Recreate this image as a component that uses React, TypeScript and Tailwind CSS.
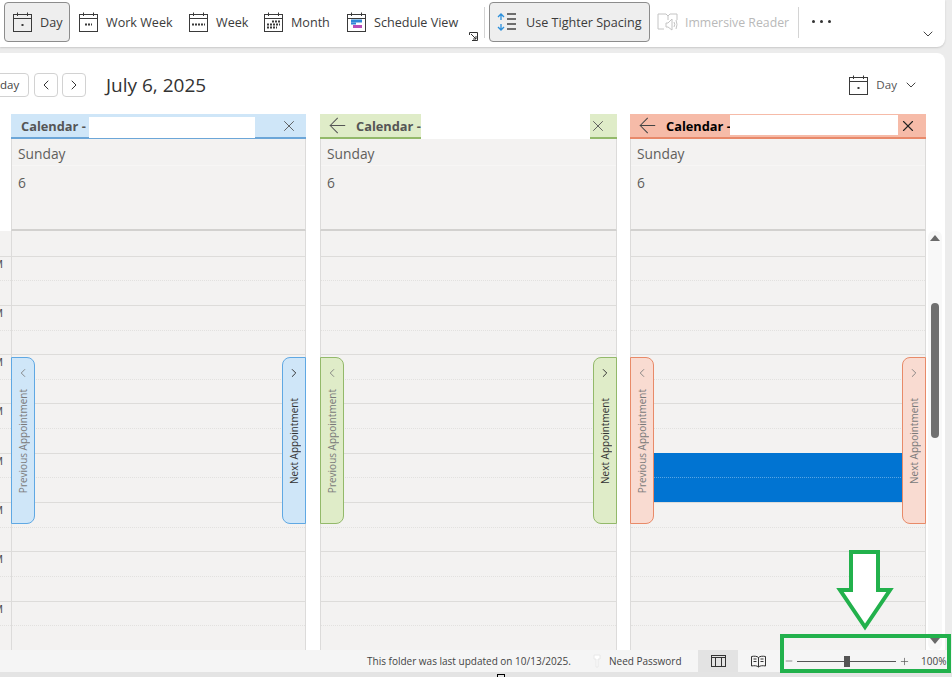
import { ArrowLeft, ChevronDown, ChevronLeft, ChevronRight, Minus, Plus, X } from 'lucide-react';

const font = { fontFamily: '"Open Sans", "Noto Sans", sans-serif' };

function CalIcon({ kind }: { kind: string }) {
  return (
    <svg viewBox="0 0 19 20" className="w-[19px] h-[20px] shrink-0" fill="none" stroke="#3a3a3a" strokeWidth="1">
      <rect x="0.5" y="2.5" width="18" height="17" />
      <path d="M0.5 6.5H18.5M4.5 0.5V4M14.5 0.5V4" />
      {kind === 'day' && <rect x="8.5" y="12" width="2" height="2" fill="#3a3a3a" stroke="none" />}
      {kind === 'work' && <path d="M6 12.5H13" strokeDasharray="2 1" strokeWidth="2" />}
      {kind === 'week' && <path d="M3 12.5H16" strokeDasharray="2 1" strokeWidth="2" />}
      {kind === 'month' && <path d="M8 9.5H16M3 12.5H16M3 15.5H13" strokeDasharray="2 1" strokeWidth="2" />}
      {kind === 'schedule' && (
        <>
          <rect x="4" y="7.5" width="11" height="3" fill="#2f88d8" stroke="none" />
          <rect x="4" y="10.5" width="5" height="2" fill="#2f88d8" stroke="none" />
          <rect x="6" y="13" width="9" height="3" fill="#b84db8" stroke="none" />
        </>
      )}
    </svg>
  );
}

function RibbonButton({ kind, label, width, active }: { kind: string; label: string; width: string; active?: boolean }) {
  return (
    <div
      className={`flex items-center gap-[8px] h-[40px] pl-[8px] shrink-0 rounded-[4px] border ${width} ${
        active ? 'bg-[#eeeeee] border-[#8c8c8c]' : 'border-transparent'
      }`}
    >
      <CalIcon kind={kind} />
      <span className="text-[12.6px] leading-[16px] pt-[1px] text-[#3b3b3b] whitespace-nowrap">{label}</span>
    </div>
  );
}

function Ribbon() {
  return (
    <div className="h-[47px] mr-[7px] bg-white rounded-br-[8px] shadow-[0_1px_2px_#c8c8c8] flex items-start pt-[2px] pl-[4px] relative">
      <RibbonButton kind="day" label="Day" width="w-[66px]" active />
      <RibbonButton kind="work" label="Work Week" width="w-[110px]" />
      <RibbonButton kind="week" label="Week" width="w-[75px]" />
      <RibbonButton kind="month" label="Month" width="w-[83px]" />
      <RibbonButton kind="schedule" label="Schedule View" width="w-[131px]" />
      <svg viewBox="0 0 9 9" className="w-[9px] h-[9px] mt-[30px] shrink-0" fill="none" stroke="#333">
        <path d="M0.5 3V0.5H8.5V8.5H3M2 2L7 7M7 4V7H4" />
      </svg>
      <div className="w-px h-[31px] bg-[#d4d4d4] mt-[5px] ml-[6px] shrink-0" />
      <div className="flex items-center h-[40px] w-[161px] ml-[4px] pl-[7px] gap-[9px] shrink-0 rounded-[4px] border border-[#8c8c8c] bg-[#eeeeee]">
        <svg viewBox="0 0 20 20" className="w-[20px] h-[20px] shrink-0" fill="none" strokeWidth="1.3">
          <path d="M4 2V8M4 12V18M1 5L4 2L7 5M1 15L4 18L7 15" stroke="#2a8fdc" />
          <path d="M10 2H19M10 7H19M10 12H19M10 17H19" stroke="#444" />
        </svg>
        <span className="text-[12.6px] leading-[16px] pt-[1px] text-[#3b3b3b] whitespace-nowrap">Use Tighter Spacing</span>
      </div>
      <div className="flex items-center h-[40px] ml-[7px] gap-[7px] shrink-0">
        <svg viewBox="0 0 21 20" className="w-[21px] h-[20px]" fill="none" stroke="#c4c4c4">
          <path d="M1 2H9L11 4L13 2H20V8M1 2V17H7M11 4V8M9 11H11L15 7V18L11 15H9ZM17 10Q18.500 12.500 17 15M19 8Q21 12.500 19 17" />
        </svg>
        <span className="w-[103px] text-[12.3px] leading-[16px] pt-[1px] text-[#b9b9b9] whitespace-nowrap">Immersive Reader</span>
      </div>
      <div className="w-px h-[31px] bg-[#d4d4d4] mt-[5px] ml-[10px] shrink-0" />
      <div className="flex gap-[5px] mt-[18px] ml-[13px] shrink-0">
        <div className="w-[3px] h-[3px] rounded-full bg-[#333]" />
        <div className="w-[3px] h-[3px] rounded-full bg-[#333]" />
        <div className="w-[3px] h-[3px] rounded-full bg-[#333]" />
      </div>
      <ChevronDown className="w-[16px] h-[16px] text-[#444] mt-[24px] ml-auto mr-[9px]" strokeWidth={1.5} />
    </div>
  );
}

function NavRow() {
  return (
    <div className="h-[61px] shrink-0 flex items-start pt-[20px] overflow-hidden rounded-tr-[8px]">
      <div className="h-[24px] w-[50px] -ml-[21px] pr-[2px] shrink-0 border border-[#d2d2d2] rounded-[4px] flex items-center justify-center text-[11.5px] text-[#444]">
        Today
      </div>
      <div className="h-[24px] w-[24px] ml-[5px] shrink-0 border border-[#d2d2d2] rounded-[4px] flex items-center justify-center">
        <ChevronLeft className="w-[16px] h-[16px] text-[#333]" strokeWidth={1.5} />
      </div>
      <div className="h-[24px] w-[24px] ml-[4px] shrink-0 border border-[#d2d2d2] rounded-[4px] flex items-center justify-center">
        <ChevronRight className="w-[16px] h-[16px] text-[#333]" strokeWidth={1.5} />
      </div>
      <div className="ml-[20px] text-[19px] leading-[24px] font-medium text-[#333]">July 6, 2025</div>
      <div className="ml-auto flex items-center h-[24px] mr-[26px]">
        <CalIcon kind="day" />
        <span className="text-[11.6px] text-[#555] ml-[8px]">Day</span>
        <ChevronDown className="w-[16px] h-[16px] text-[#444] ml-[6px]" strokeWidth={1.5} />
      </div>
    </div>
  );
}

function HalfRows() {
  return (
    <>
      {Array.from({ length: 17 }).map((_, i) => (
        <div
          key={i}
          className={`h-[24.65px] border-b ${
            i % 2 === 0 ? 'border-solid border-[#dddcda]' : 'border-dotted border-[#e2e1df]'
          }`}
        />
      ))}
    </>
  );
}

type Tone = {
  tabBg: string;
  tabBorder: string;
};

function SideTab({ side, tone, label, dim }: { side: 'left' | 'right'; tone: Tone; label: string; dim: boolean }) {
  const textColor = dim ? 'text-[#7a7a7a]' : 'text-[#333]';
  return (
    <div
      className={`absolute top-[126px] w-[24px] h-[167px] border flex flex-col items-center ${tone.tabBg} ${tone.tabBorder} ${
        side === 'left' ? '-left-px rounded-r-[8px]' : '-right-px rounded-l-[8px]'
      }`}
    >
      {side === 'left' ? (
        <ChevronLeft className={`w-[14px] h-[14px] mt-[8px] shrink-0 ${textColor}`} strokeWidth={1.5} />
      ) : (
        <ChevronRight className={`w-[14px] h-[14px] mt-[8px] shrink-0 ${textColor}`} strokeWidth={dim ? 1.5 : 1.7} />
      )}
      <span
        className={`text-[10px] leading-[12px] whitespace-nowrap rotate-180 [writing-mode:vertical-rl] ${textColor} ${
          side === 'left' ? 'mt-[9px]' : 'mt-[18px]'
        }`}
      >
        {label}
      </span>
    </div>
  );
}

function Column({
  width,
  tone,
  header,
  nextDim,
  event,
}: {
  width: string;
  tone: Tone;
  header: React.ReactNode;
  nextDim: boolean;
  event?: boolean;
}) {
  return (
    <div className={`${width} shrink-0 flex flex-col`}>
      {header}
      <div className="h-[92px] shrink-0 bg-[#f3f2f1] border-l border-r border-[#dcdbda] border-b-2 border-b-[#d2d1cf] text-[#605e5c] text-[13.8px]">
        <div className="h-[27px] pl-[6px] leading-[29px] border-b border-[#f7f6f5]">Sunday</div>
        <div className="pl-[6px] leading-[33px]">6</div>
      </div>
      <div className="relative flex-1 pt-[1px] bg-[#f3f2f1] border-l border-r border-[#dcdbda]">
        <HalfRows />
        {event && (
          <div className="absolute left-[22px] right-[22px] top-[222px] h-[49px] bg-[#0174d2] flex items-center">
            <div className="w-full border-t border-dotted border-[#5aa5e3]" />
          </div>
        )}
        <SideTab side="left" tone={tone} label="Previous Appointment" dim />
        <SideTab side="right" tone={tone} label="Next Appointment" dim={nextDim} />
      </div>
    </div>
  );
}

const blue = { tabBg: 'bg-[#cfe6f8]', tabBorder: 'border-[#5fa8e3]' };
const green = { tabBg: 'bg-[#dfecc8]', tabBorder: 'border-[#93b96a]' };
const red = { tabBg: 'bg-[#f9dbd1]', tabBorder: 'border-[#e88a68]' };

function Scrollbar() {
  return (
    <div className="w-[14px] ml-[2px] mt-[117px] shrink-0 bg-[#f8f8f8] rounded-[6px] flex flex-col items-center">
      <div className="mt-[4px] w-0 h-0 border-l-[5px] border-r-[5px] border-b-[6px] border-l-transparent border-r-transparent border-b-[#6a6a6a]" />
      <div className="mt-[62px] w-[8px] h-[135px] rounded-[4px] bg-[#707070]" />
      <div className="mt-auto mb-[6px] w-0 h-0 border-l-[5px] border-r-[5px] border-t-[6px] border-l-transparent border-r-transparent border-t-[#6a6a6a]" />
    </div>
  );
}

function Columns() {
  return (
    <div className="flex-1 flex min-h-0 overflow-hidden">
      <div className="w-[11px] shrink-0 flex flex-col">
        <div className="h-[117px] shrink-0" />
        <div className="relative flex-1 pt-[1px] bg-[#f3f2f1] overflow-hidden">
          <HalfRows />
          {[0, 1, 2, 3, 4, 5, 6, 7].map((i) => (
            <div key={i} className="absolute right-[8px] text-[10.500px] leading-[12px] text-[#444]" style={{ top: 26.5 + i * 49.3 }}>
              AM
            </div>
          ))}
        </div>
      </div>
      <Column
        width="w-[295px]"
        tone={blue}
        nextDim={false}
        header={
          <div className="h-[25px] shrink-0 flex items-start bg-[#cfe6f8] border-b-2 border-[#6ca6d8]">
            <span className="w-[68px] shrink-0 text-[12.8px] font-bold text-[#555] leading-[24px] ml-[10px] whitespace-nowrap">Calendar -</span>
            <div className="w-[166px] h-[21px] mt-[3px] bg-white shrink-0" />
            <X className="w-[18px] h-[18px] text-[#555] ml-auto mr-[8px] mt-[3px] shrink-0" strokeWidth={1.2} />
          </div>
        }
      />
      <div className="w-[14px] shrink-0" />
      <Column
        width="w-[297px]"
        tone={green}
        nextDim={false}
        header={
          <div className="h-[25px] shrink-0 flex items-start bg-white">
            <div className="w-[101px] h-full shrink-0 bg-[#dfecc8] border-b-2 border-[#93b96a] flex items-start">
              <ArrowLeft className="w-[25px] h-[25px] text-[#555] ml-[5px] -mt-[1px] shrink-0" strokeWidth={1} />
              <span className="text-[12.8px] font-bold text-[#555] leading-[24px] ml-[6px] whitespace-nowrap">Calendar -</span>
            </div>
            <div className="w-[27px] h-full ml-auto bg-[#dfecc8] border-b-2 border-[#93b96a]">
              <X className="w-[18px] h-[18px] text-[#555] -ml-[1px] mt-[3px]" strokeWidth={1.2} />
            </div>
          </div>
        }
      />
      <div className="w-[13px] shrink-0" />
      <Column
        width="w-[296px]"
        tone={red}
        nextDim
        event
        header={
          <div className="h-[25px] shrink-0 flex items-start bg-[#f6bba8] border-b-2 border-[#e8896a]">
            <ArrowLeft className="w-[25px] h-[25px] text-[#444] ml-[5px] -mt-[1px] shrink-0" strokeWidth={1} />
            <span className="w-[64px] shrink-0 text-[12.8px] font-bold text-black leading-[24px] ml-[6px] whitespace-nowrap">Calendar -</span>
            <div className="w-[168px] h-[20px] mt-[1px] bg-white shrink-0" />
            <X className="w-[18px] h-[18px] text-[#222] ml-auto mr-[9px] mt-[3px] shrink-0" strokeWidth={1.5} />
          </div>
        }
      />
      <Scrollbar />
    </div>
  );
}

function StatusBar() {
  return (
    <div className="h-[22px] shrink-0 bg-[#f5f5f5] flex items-center text-[10px] text-[#444] whitespace-nowrap">
      <span className="ml-[367px] w-[205px]">This folder was last updated on 10/13/2025.</span>
      <svg viewBox="0 0 8 14" className="w-[8px] h-[14px] ml-[21px] shrink-0" fill="#ffffff" stroke="#e8e8e8">
        <path d="M1 1H7V5H5V13H3V5H1Z" />
      </svg>
      <span className="ml-[8px] w-[71px]">Need Password</span>
      <div className="w-[40px] h-full ml-[18px] bg-[#e3e3e3] flex items-center justify-center">
        <svg viewBox="0 0 15 12" className="w-[15px] h-[12px]" fill="none" stroke="#333">
          <rect x="0.5" y="0.5" width="14" height="11" />
          <path d="M0.5 2.500H14.500M4.500 2.500V11.500M10.500 2.500V11.500" />
        </svg>
      </div>
      <svg viewBox="0 0 15 13" className="w-[15px] h-[13px] ml-[13px] shrink-0" fill="none" stroke="#333">
        <path d="M7.500 2.500C6 1 3 1 0.500 1.500V11C3 10.500 6 10.500 7.500 12C9 10.500 12 10.500 14.500 11V1.500C12 1 9 1 7.500 2.500ZM7.500 2.500V12M2.500 4H5.500M2.500 6.500H5.500M9.500 4H12.500M9.500 6.500H12.500" />
      </svg>
      <Minus className="w-[10px] h-[10px] ml-[18px] text-[#555] shrink-0" strokeWidth={1.5} />
      <div className="relative w-[99px] h-[1px] ml-[3px] bg-[#555] shrink-0">
        <div className="absolute left-[47px] -top-[5px] w-[6px] h-[11px] bg-[#555]" />
      </div>
      <Plus className="w-[11px] h-[11px] ml-[3px] text-[#555] shrink-0" strokeWidth={1.5} />
      <span className="ml-[11px]">100%</span>
    </div>
  );
}

export default function App() {
  return (
    <div className="relative w-[952px] h-[677px] overflow-hidden bg-[#ececec] flex flex-col" style={font}>
      <Ribbon />
      <div className="mt-[6px] mr-[7px] h-[597px] shrink-0 bg-white rounded-tr-[8px] flex flex-col">
        <NavRow />
        <Columns />
      </div>
      <StatusBar />
      <div className="h-[5px] shrink-0 bg-[#e4e4e4]">
        <div className="w-[8px] h-[3px] ml-[497px] mt-[2px] border border-b-0 border-black" />
      </div>
      {/* green callout drawn on top of the screenshot */}
      <svg viewBox="0 0 60 86" className="absolute left-[835px] top-[547px] w-[60px] h-[86px]" fill="#ffffff" stroke="#22b14c" strokeWidth="4">
        <path d="M16 5H43V43H55L30 80L5 43H16Z" />
      </svg>
      <div className="absolute left-[780px] top-[634px] w-[171px] h-[39px] border-[4px] border-[#22b14c]" />
    </div>
  );
}
